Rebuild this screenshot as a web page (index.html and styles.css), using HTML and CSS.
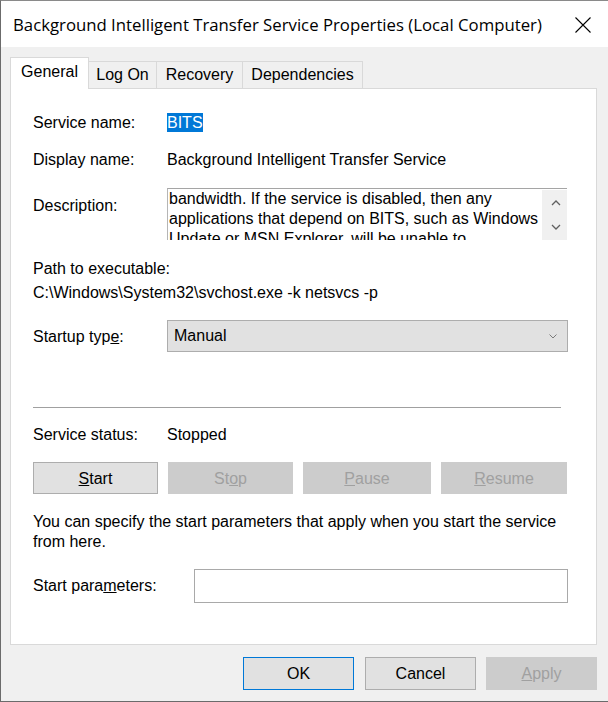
FILE: index.html
```html
<!DOCTYPE html>
<html lang="en">
<head>
  <meta charset="UTF-8" />
  <title>BITS Properties</title>
  <link rel="stylesheet" href="styles.css">
</head>
<body>
  <div class="window">
    <div class="titlebar">
      <span class="title">Background Intelligent Transfer Service Properties (Local Computer)</span>
      <svg class="close" width="16" height="16" viewBox="0 0 16 16">
        <path d="M0.5 0.5 L15.5 15.5 M15.5 0.5 L0.5 15.5" stroke="#000" stroke-width="1.1" fill="none"/>
      </svg>
    </div>

    <div class="client">
      <div class="tabs">
        <div class="tab active">General</div>
        <div class="tab tab-logon">Log On</div>
        <div class="tab tab-recovery">Recovery</div>
        <div class="tab tab-deps">Dependencies</div>
      </div>

      <div class="panel">
        <div class="row r-name">
          <span class="label">Service name:</span>
          <span class="sel">BITS</span>
        </div>
        <div class="row r-disp">
          <span class="label">Display name:</span>
          <span>Background Intelligent Transfer Service</span>
        </div>
        <div class="row r-desc">
          <span class="label">Description:</span>
          <div class="desc-box">
            <div class="desc-text">
              <div>bandwidth. If the service is disabled, then any</div>
              <div>applications that depend on BITS, such as Windows</div>
              <div>Update or MSN Explorer, will be unable to</div>
            </div>
            <div class="scroll">
              <svg width="10" height="6" viewBox="0 0 10 6"><path d="M1 5 L5 1 L9 5" stroke="#606060" stroke-width="1.3" fill="none"/></svg>
              <svg width="10" height="6" viewBox="0 0 10 6"><path d="M1 1 L5 5 L9 1" stroke="#606060" stroke-width="1.3" fill="none"/></svg>
            </div>
          </div>
        </div>

        <div class="path-label">Path to executable:</div>
        <div class="path-value">C:\Windows\System32\svchost.exe -k netsvcs -p</div>

        <div class="row r-startup">
          <span class="label">Startup typ<u>e</u>:</span>
          <div class="combo">
            <span>Manual</span>
            <svg class="chev" width="8" height="5" viewBox="0 0 8 5"><path d="M0.5 0.5 L4 4 L7.5 0.5" stroke="#7a7a7a" stroke-width="1" fill="none"/></svg>
          </div>
        </div>

        <div class="sep"></div>

        <div class="row r-status">
          <span class="label">Service status:</span>
          <span>Stopped</span>
        </div>

        <div class="svc-buttons">
          <div class="btn"><u>S</u>tart</div>
          <div class="btn disabled">St<u>o</u>p</div>
          <div class="btn disabled"><u>P</u>ause</div>
          <div class="btn disabled"><u>R</u>esume</div>
        </div>

        <p class="note">You can specify the start parameters that apply when you start the service<br>from here.</p>

        <div class="row r-params">
          <span class="label label-wide">Start para<u>m</u>eters:</span>
          <div class="edit"></div>
        </div>
      </div>

      <div class="footer">
        <div class="btn dlg default">OK</div>
        <div class="btn dlg cancel">Cancel</div>
        <div class="btn dlg disabled"><u>A</u>pply</div>
      </div>
    </div>
  </div>
</body>
</html>
```

FILE: styles.css
```css
body {
  margin: 0;
  font-family: 'Liberation Sans', Arial, sans-serif;
  font-size: 16px;
  color: #000;
  background: #f0f0f0;
}
.window {
  width: 608px;
  height: 702px;
  box-sizing: border-box;
  border-top: 1px solid #8a8a8a;
  border-left: 1px solid #6b6b6b;
  border-bottom: 1px solid #6b6b6b;
  display: flex;
  flex-direction: column;
  overflow: hidden;
}
.titlebar {
  height: 46px;
  flex: none;
  background: #fff;
  display: flex;
  align-items: center;
  padding-left: 12px;
}
.title {
  font-family: 'Open Sans', 'Noto Sans', sans-serif;
  font-size: 16.75px;
  white-space: nowrap;
}
.close {
  margin-left: auto;
  margin-right: 17px;
  margin-top: 2px;
}
.client {
  flex: 1;
  background: #f0f0f0;
  padding: 10px 11px 0 9px;
}
.tabs {
  display: flex;
  align-items: flex-end;
  height: 32px;
  position: relative;
  z-index: 1;
}
.tab {
  box-sizing: border-box;
  height: 27px;
  margin-bottom: 1px;
  padding-top: 3px;
  line-height: 20px;
  text-align: center;
  background: #f0f0f0;
  border: 1px solid #d9d9d9;
  border-left: none;
  border-bottom: none;
}
.tab.active {
  width: 79px;
  height: 32px;
  margin-bottom: 0;
  padding-top: 4px;
  background: #fff;
  border-left: 1px solid #d9d9d9;
}
.tab-logon { width: 68px; }
.tab-recovery { width: 86px; }
.tab-deps { width: 120px; }
.panel {
  box-sizing: border-box;
  height: 557px;
  margin-top: -1px;
  background: #fff;
  border: 1px solid #d9d9d9;
  padding: 24px 28px 0 22px;
}
.row {
  display: flex;
  line-height: 20px;
}
.label {
  width: 134px;
  flex: none;
}
.label-wide {
  width: 161px;
}
.sel {
  display: inline-block;
  height: 19px;
  line-height: 19px;
  background: #0078d7;
  color: #fff;
}
.r-disp { margin-top: 17px; }
.r-desc { margin-top: 18px; height: 52px; }
.r-desc .label { padding-top: 8px; }
.desc-box {
  width: 400px;
  height: 52px;
  box-sizing: border-box;
  border-top: 1px solid #a5a5a5;
  border-left: 1px solid #b5b5b5;
  display: flex;
  overflow: hidden;
}
.desc-text {
  flex: 1;
  padding-left: 1px;
  white-space: nowrap;
  overflow: hidden;
}
.scroll {
  width: 25px;
  flex: none;
  margin-top: 1px;
  background: #f0f0f0;
  display: flex;
  flex-direction: column;
  align-items: center;
  padding-top: 10px;
  gap: 18px;
}
.scroll svg {
  margin-left: 2px;
}
.path-label {
  margin-top: 19px;
  line-height: 20px;
}
.path-value {
  margin-top: 4px;
  line-height: 20px;
}
.r-startup {
  margin-top: 17px;
  height: 32px;
  line-height: 33px;
}
.combo {
  width: 401px;
  height: 32px;
  box-sizing: border-box;
  background: #e1e1e1;
  border: 1px solid #adadad;
  padding-left: 6px;
  line-height: 32px;
  display: flex;
  align-items: center;
}
.chev {
  margin-left: auto;
  margin-right: 10px;
}
.sep {
  margin-top: 55px;
  margin-right: 7px;
  border-top: 1px solid #a0a0a0;
}
.r-status { margin-top: 17px; }
.svc-buttons {
  margin-top: 17px;
  display: grid;
  grid-template-columns: 125px 125px 128px 126px;
  column-gap: 10px;
}
.btn {
  box-sizing: border-box;
  height: 32px;
  line-height: 32px;
  text-align: center;
  background: #e1e1e1;
  border: 1px solid #adadad;
}
.btn.disabled {
  background: #cccccc;
  border-color: #cccccc;
  color: #a0a0a0;
}
.note {
  margin: 18px 0 0;
  line-height: 20px;
}
.r-params {
  margin-top: 17px;
  line-height: 34px;
}
.edit {
  width: 374px;
  height: 34px;
  box-sizing: border-box;
  border: 1px solid #a9a9a9;
  background: #fff;
}
.footer {
  margin-top: 12px;
  display: flex;
  justify-content: flex-end;
}
.btn.dlg {
  width: 111px;
  height: 33px;
  line-height: 32px;
}
.btn.default {
  border-color: #0078d7;
}
.btn.cancel {
  margin-left: 11px;
  margin-right: 10px;
}
```
